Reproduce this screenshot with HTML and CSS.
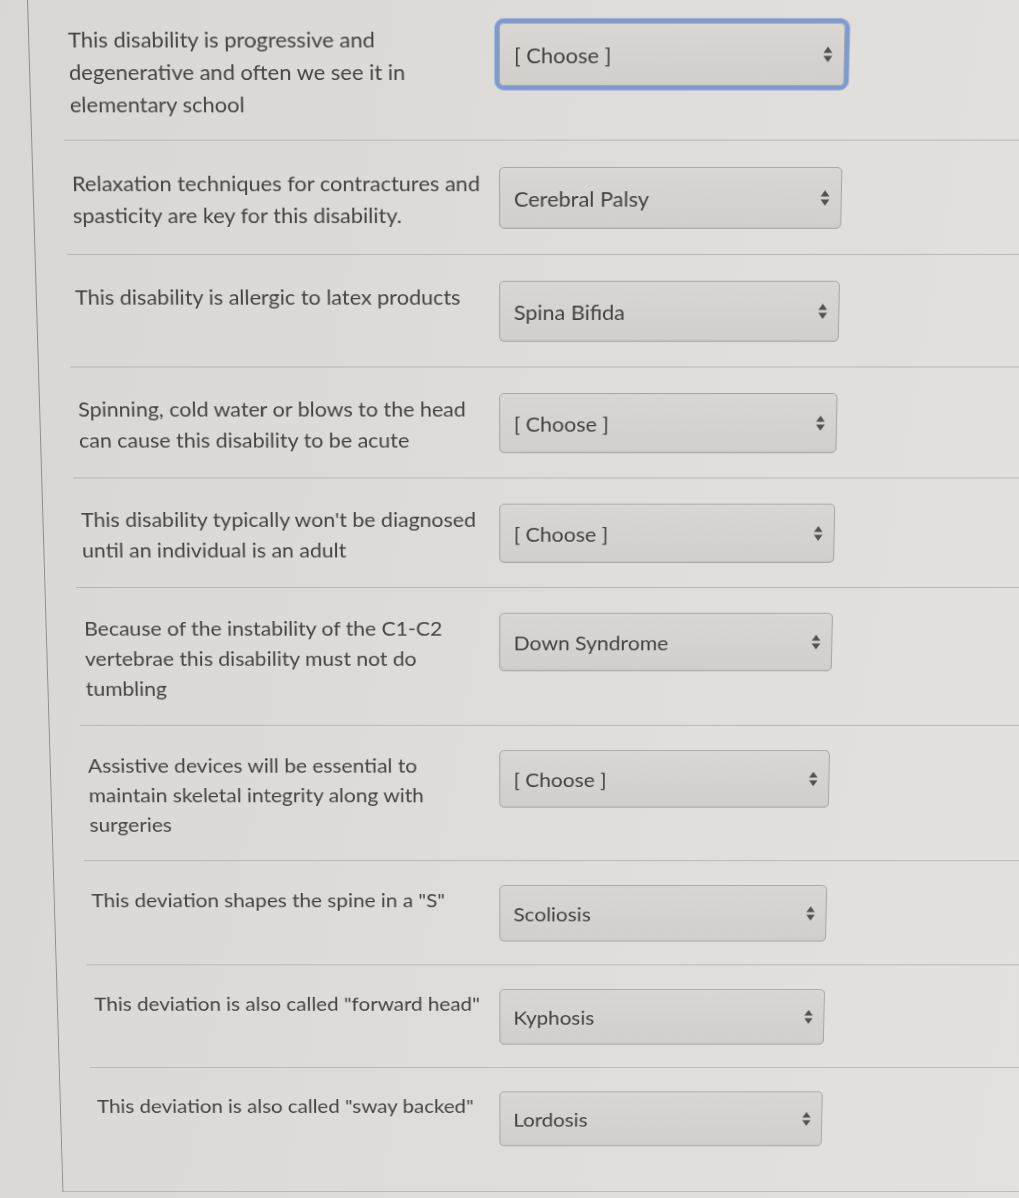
FILE: index.html
```html
<!DOCTYPE html>
<html lang="en">
<head>
<meta charset="utf-8">
<title>Matching quiz</title>
<link rel="stylesheet" href="styles.css">
</head>
<body>
<div class="stage">
  <div class="quiz">
    <div class="row first">
      <div class="q">This disability is progressive and degenerative and often we see it in elementary school</div>
      <div class="select focused"><span>[ Choose ]</span><svg class="arrows" viewBox="0 0 10 18"><path d="M5 1 L9.5 7.5 H0.5Z M5 17 L9.5 10.5 H0.5Z"/></svg></div>
    </div>
    <div class="row">
      <div class="q">Relaxation techniques for contractures and spasticity are key for this disability.</div>
      <div class="select"><span>Cerebral Palsy</span><svg class="arrows" viewBox="0 0 10 18"><path d="M5 1 L9.5 7.5 H0.5Z M5 17 L9.5 10.5 H0.5Z"/></svg></div>
    </div>
    <div class="row">
      <div class="q">This disability is allergic to latex products</div>
      <div class="select"><span>Spina Bifida</span><svg class="arrows" viewBox="0 0 10 18"><path d="M5 1 L9.5 7.5 H0.5Z M5 17 L9.5 10.5 H0.5Z"/></svg></div>
    </div>
    <div class="row">
      <div class="q">Spinning, cold water or blows to the head can cause this disability to be acute</div>
      <div class="select"><span>[ Choose ]</span><svg class="arrows" viewBox="0 0 10 18"><path d="M5 1 L9.5 7.5 H0.5Z M5 17 L9.5 10.5 H0.5Z"/></svg></div>
    </div>
    <div class="row">
      <div class="q">This disability typically won't be diagnosed until an individual is an adult</div>
      <div class="select"><span>[ Choose ]</span><svg class="arrows" viewBox="0 0 10 18"><path d="M5 1 L9.5 7.5 H0.5Z M5 17 L9.5 10.5 H0.5Z"/></svg></div>
    </div>
    <div class="row">
      <div class="q">Because of the instability of the C1-C2 vertebrae this disability must not do tumbling</div>
      <div class="select"><span>Down Syndrome</span><svg class="arrows" viewBox="0 0 10 18"><path d="M5 1 L9.5 7.5 H0.5Z M5 17 L9.5 10.5 H0.5Z"/></svg></div>
    </div>
    <div class="row">
      <div class="q">Assistive devices will be essential to maintain skeletal integrity along with surgeries</div>
      <div class="select"><span>[ Choose ]</span><svg class="arrows" viewBox="0 0 10 18"><path d="M5 1 L9.5 7.5 H0.5Z M5 17 L9.5 10.5 H0.5Z"/></svg></div>
    </div>
    <div class="row">
      <div class="q">This deviation shapes the spine in a "S"</div>
      <div class="select"><span>Scoliosis</span><svg class="arrows" viewBox="0 0 10 18"><path d="M5 1 L9.5 7.5 H0.5Z M5 17 L9.5 10.5 H0.5Z"/></svg></div>
    </div>
    <div class="row">
      <div class="q">This deviation is also called "forward head"</div>
      <div class="select"><span>Kyphosis</span><svg class="arrows" viewBox="0 0 10 18"><path d="M5 1 L9.5 7.5 H0.5Z M5 17 L9.5 10.5 H0.5Z"/></svg></div>
    </div>
    <div class="row last">
      <div class="q">This deviation is also called "sway backed"</div>
      <div class="select"><span>Lordosis</span><svg class="arrows" viewBox="0 0 10 18"><path d="M5 1 L9.5 7.5 H0.5Z M5 17 L9.5 10.5 H0.5Z"/></svg></div>
    </div>
  </div>
</div>
</body>
</html>
```
FILE: styles.css
```css
html, body {
  margin: 0;
  height: 100%;
}
body {
  background: linear-gradient(100deg, #d9d7d3 0%, #dedcd8 45%, #e3e2df 100%);
  overflow: hidden;
  font-family: Lato, "Noto Sans", sans-serif;
  color: #444444;
}
.stage {
  width: 1140px;
  transform-origin: 505px 0;
  transform: perspective(2000px) rotateX(-7.1deg);
}
.quiz {
  margin-left: 27px;
  border-left: 1px solid #8f8d8a;
  border-bottom: 1px solid #8f8d8a;
  padding-bottom: 27px;
}
.row {
  margin-left: 32px;
  padding: 27px 0 24px 7px;
  border-bottom: 1px solid #b6b4b0;
  display: grid;
  grid-template-columns: 424px 347px;
  column-gap: 8px;
  align-items: start;
}
.row.first {
  padding-top: 23px;
  padding-bottom: 20px;
}
.row.last {
  border-bottom: none;
}
.q {
  font-size: 22px;
  line-height: 33px;
}
.select {
  box-sizing: border-box;
  height: 64px;
  margin-bottom: 2px;
  border: 1px solid #a9a7a3;
  border-radius: 5px;
  background: linear-gradient(#d9d7d3, #d1cfcb);
  box-shadow: inset 0 -1px 2px rgba(0, 0, 0, 0.06);
  display: flex;
  align-items: center;
  justify-content: space-between;
  padding: 0 11px 0 14px;
  font-size: 22px;
  color: #424242;
}
.select.focused {
  box-shadow: 0 0 0 4px #7d9ad4, 0 0 0 5px #a9b9d8;
}
.arrows {
  width: 10px;
  height: 18px;
  fill: #525252;
}
```
